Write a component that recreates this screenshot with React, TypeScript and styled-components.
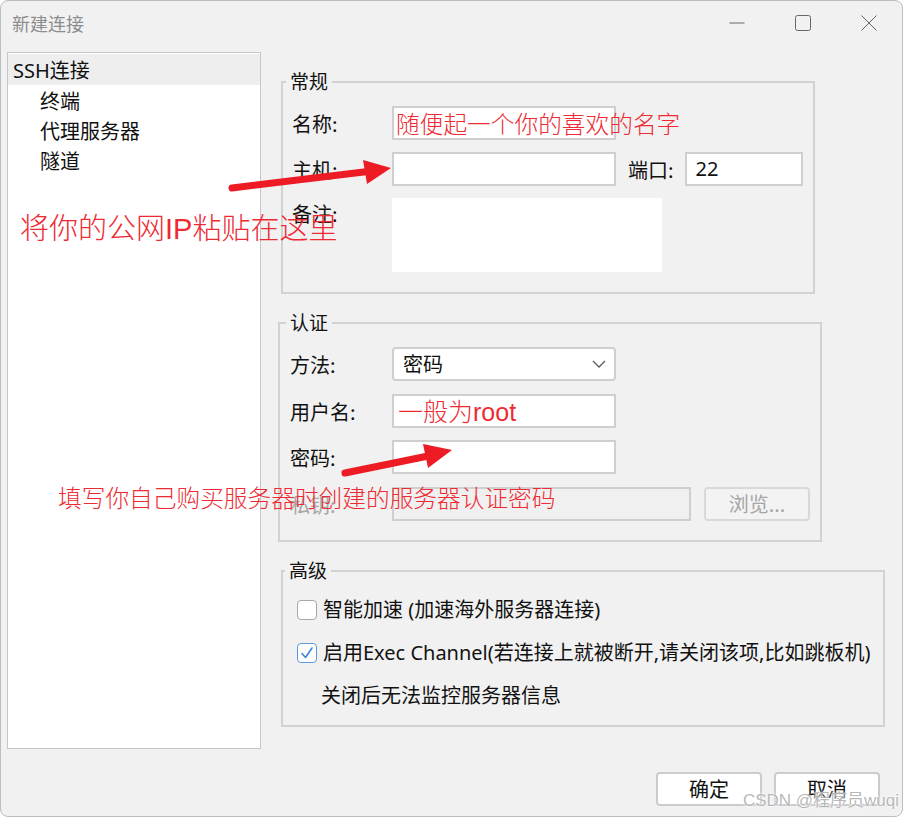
import React from 'react'
import styled, { createGlobalStyle } from 'styled-components'

const GlobalStyle = createGlobalStyle`
  html, body {
    margin: 0;
    padding: 0;
    background: #ffffff;
  }
  * {
    box-sizing: border-box;
  }
  body {
    font-family: "Noto Sans", "Noto Sans CJK SC", sans-serif;
  }
`

const uiFont = `"Noto Sans", "Noto Sans CJK SC", sans-serif`
const markFont = `"Liberation Sans", "Noto Sans CJK SC", sans-serif`
const red = '#ee2a33'

const Window = styled.div`
  position: relative;
  width: 903px;
  height: 817px;
  background: #f1f1f1;
  border: 1px solid #bdbdbd;
  border-radius: 8px;
  display: flex;
  flex-direction: column;
  overflow: hidden;
  font-family: ${uiFont};
  color: #111;
`

const TitleBar = styled.div`
  height: 43px;
  display: flex;
  align-items: center;
  padding-left: 11px;
`

const Title = styled.div`
  font-size: 18px;
  line-height: 24px;
  color: #8c8c8c;
  font-family: "Noto Sans CJK SC", sans-serif;
`

const Controls = styled.div`
  margin-left: auto;
  display: flex;
  height: 100%;
`

const ControlButton = styled.div`
  width: 66px;
  height: 100%;
  display: flex;
  align-items: center;
  justify-content: center;
  color: #666;
`

const Body = styled.div`
  display: flex;
  align-items: flex-start;
`

const Tree = styled.div`
  margin: 8px 0 0 6px;
  width: 254px;
  height: 697px;
  background: #fff;
  border: 1.5px solid #c6c6c6;
  padding-top: 1px;
`

const TreeItem = styled.div<{ $level: number; $selected?: boolean }>`
  height: ${p => (p.$selected ? 31 : 30)}px;
  display: flex;
  align-items: center;
  padding-top: ${p => (p.$selected ? 2 : 3)}px;
  padding-left: ${p => (p.$level === 0 ? 5 : 32)}px;
  background: ${p => (p.$selected ? '#eeeeee' : 'transparent')};
  font-size: 20px;
  line-height: 26px;
  font-family: "Noto Sans", "Noto Sans CJK SC", sans-serif;
`

const Column = styled.div`
  display: flex;
  flex-direction: column;
`

const Group = styled.div<{ $ml: number; $w: number; $mt: number; $pad: string }>`
  position: relative;
  margin-left: ${p => p.$ml}px;
  margin-top: ${p => p.$mt}px;
  width: ${p => p.$w}px;
  border: 2px solid #d2d2d2;
  padding: ${p => p.$pad};
  display: flex;
  flex-direction: column;
`

const Legend = styled.span<{ $left: number }>`
  position: absolute;
  top: -14px;
  left: ${p => p.$left}px;
  padding: 0 4px;
  background: #f1f1f1;
  font-size: 19px;
  line-height: 24px;
  font-family: "Noto Sans CJK SC", sans-serif;
`

const Row = styled.div<{ $gap?: number; $top?: boolean }>`
  display: flex;
  align-items: ${p => (p.$top ? 'flex-start' : 'center')};
  margin-top: ${p => p.$gap ?? 0}px;
`

const Label = styled.div<{ $w: number; $muted?: boolean; $pt?: number }>`
  width: ${p => p.$w}px;
  flex-shrink: 0;
  font-size: 20px;
  line-height: 28px;
  padding-top: ${p => p.$pt ?? 1}px;
  color: ${p => (p.$muted ? '#a6a6a6' : '#111')};
  font-family: "Noto Sans CJK SC", sans-serif;
`

const InlineLabel = styled(Label)`
  width: auto;
  margin: 0 11px 0 12px;
`

const Field = styled.div<{ $w: number; $disabled?: boolean }>`
  width: ${p => p.$w}px;
  height: 34px;
  background: ${p => (p.$disabled ? '#f0f0f0' : '#fff')};
  border: 2px solid #cfcfcf;
  display: flex;
  align-items: center;
  padding-left: 9px;
  font-size: 20px;
  line-height: 28px;
`

const Memo = styled.div`
  width: 270px;
  height: 74px;
  background: #fff;
`

const Select = styled(Field)`
  border-radius: 4px;
  justify-content: space-between;
  padding-right: 8px;
  font-family: "Noto Sans CJK SC", sans-serif;
`

const Button = styled.div<{ $disabled?: boolean }>`
  width: 106px;
  height: 34px;
  border: 2px solid ${p => (p.$disabled ? '#d8d8d8' : '#cccccc')};
  border-radius: 4px;
  background: ${p => (p.$disabled ? '#f3f3f3' : '#fff')};
  color: ${p => (p.$disabled ? '#a6a6a6' : '#111')};
  display: flex;
  align-items: center;
  justify-content: center;
  font-size: 20px;
  line-height: 28px;
  font-family: "Noto Sans CJK SC", sans-serif;
`

const BrowseButton = styled(Button)`
  margin-left: 13px;
`

const CheckRow = styled.div<{ $gap?: number }>`
  height: 30px;
  display: flex;
  align-items: center;
  margin-top: ${p => p.$gap ?? 0}px;
  font-size: 20px;
  line-height: 28px;
`

const Box = styled.span<{ $checked?: boolean }>`
  width: 20px;
  height: 20px;
  border: 1.5px solid ${p => (p.$checked ? '#5a9be0' : '#a8a8a8')};
  border-radius: 4px;
  background: #fff;
  display: flex;
  align-items: center;
  justify-content: center;
  margin-right: 6px;
  flex-shrink: 0;
`

const Note = styled.div`
  height: 30px;
  display: flex;
  align-items: center;
  margin-top: 12px;
  padding-left: 24px;
  font-size: 20px;
  line-height: 28px;
  font-family: "Noto Sans CJK SC", sans-serif;
`

const Footer = styled.div`
  display: flex;
  justify-content: flex-end;
  gap: 12px;
  padding: 23px 22px 0 0;
`

const Overlay = styled.svg`
  position: absolute;
  left: -1px;
  top: -1px;
  pointer-events: none;
`

const Mark = styled.div<{ $x: number; $y: number; $size: number }>`
  position: absolute;
  left: ${p => p.$x}px;
  top: ${p => p.$y}px;
  font-size: ${p => p.$size}px;
  line-height: ${p => p.$size}px;
  font-weight: 300;
  color: ${red};
  white-space: nowrap;
  font-family: ${markFont};
  pointer-events: none;
`

const Watermark = styled.div`
  position: absolute;
  right: 3px;
  bottom: 5px;
  font-size: 17px;
  line-height: 20px;
  color: rgba(160, 160, 160, 0.75);
  text-shadow: 0 0 2px #fff, 0 0 2px #fff;
  font-family: "Liberation Sans", "Noto Sans CJK SC", sans-serif;
`

const Chevron = () => (
  <svg width="14" height="8" viewBox="0 0 14 8">
    <polyline points="1,1 7,7 13,1" fill="none" stroke="#5a5a5a" strokeWidth="1.3" />
  </svg>
)

const Check = () => (
  <svg width="14" height="14" viewBox="0 0 14 14">
    <polyline points="2,7.5 5.5,11.5 12,2" fill="none" stroke="#3b86d8" strokeWidth="1.6" strokeLinecap="round" strokeLinejoin="round" />
  </svg>
)

const App: React.FC = () => {
  return (
    <>
      <GlobalStyle />
      <Window>
        <TitleBar>
          <Title>新建连接</Title>
          <Controls>
            <ControlButton>
              <svg width="16" height="16" viewBox="0 0 16 16">
                <line x1="0.5" y1="8" x2="15.5" y2="8" stroke="#666" strokeWidth="1" />
              </svg>
            </ControlButton>
            <ControlButton>
              <svg width="16" height="16" viewBox="0 0 16 16">
                <rect x="0.5" y="0.5" width="15" height="15" rx="2" fill="none" stroke="#666" strokeWidth="1" />
              </svg>
            </ControlButton>
            <ControlButton>
              <svg width="16" height="16" viewBox="0 0 16 16">
                <path d="M0.5 0.5 L15.5 15.5 M15.5 0.5 L0.5 15.5" stroke="#666" strokeWidth="1" />
              </svg>
            </ControlButton>
          </Controls>
        </TitleBar>

        <Body>
          <Tree>
            <TreeItem $level={0} $selected>SSH连接</TreeItem>
            <TreeItem $level={1}>终端</TreeItem>
            <TreeItem $level={1}>代理服务器</TreeItem>
            <TreeItem $level={1}>隧道</TreeItem>
          </Tree>

          <Column>
            <Group $ml={20} $w={534} $mt={37} $pad="23px 0 20px 9px">
              <Legend $left={3}>常规</Legend>
              <Row>
                <Label $w={100}>名称:</Label>
                <Field $w={224} />
              </Row>
              <Row $gap={12}>
                <Label $w={100}>主机:</Label>
                <Field $w={224} />
                <InlineLabel $w={0}>端口:</InlineLabel>
                <Field $w={118}>22</Field>
              </Row>
              <Row $gap={12} $top>
                <Label $w={100} $pt={2}>备注:</Label>
                <Memo />
              </Row>
            </Group>

            <Group $ml={17} $w={544} $mt={28} $pad="23px 0 19px 10px">
              <Legend $left={6}>认证</Legend>
              <Row>
                <Label $w={102}>方法:</Label>
                <Select $w={224}>
                  密码
                  <Chevron />
                </Select>
              </Row>
              <Row $gap={13}>
                <Label $w={102}>用户名:</Label>
                <Field $w={224} />
              </Row>
              <Row $gap={12}>
                <Label $w={102}>密码:</Label>
                <Field $w={224} />
              </Row>
              <Row $gap={13}>
                <Label $w={102} $muted>私钥:</Label>
                <Field $w={299} $disabled />
                <BrowseButton $disabled>浏览...</BrowseButton>
              </Row>
            </Group>

            <Group $ml={20} $w={604} $mt={28} $pad="23px 0 15px 14px">
              <Legend $left={2}>高级</Legend>
              <CheckRow>
                <Box />
                智能加速 (加速海外服务器连接)
              </CheckRow>
              <CheckRow $gap={13}>
                <Box $checked>
                  <Check />
                </Box>
                启用Exec Channel(若连接上就被断开,请关闭该项,比如跳板机)
              </CheckRow>
              <Note>关闭后无法监控服务器信息</Note>
            </Group>
          </Column>
        </Body>

        <Footer>
          <Button>确定</Button>
          <Button>取消</Button>
        </Footer>

        <Mark $x={395} $y={113} $size={23.7}>随便起一个你的喜欢的名字</Mark>
        <Mark $x={19} $y={214} $size={29}>将你的公网IP粘贴在这里</Mark>
        <Mark $x={397} $y={399} $size={25}>一般为root</Mark>
        <Mark $x={57} $y={487} $size={23.7}>填写你自己购买服务器时创建的服务器认证密码</Mark>

        <Overlay width="903" height="817" viewBox="0 0 903 817">
          <line x1="232" y1="188" x2="372" y2="171" stroke="#ed1c24" strokeWidth="7" strokeLinecap="round" />
          <polygon points="391,168 363,160 367,184" fill="#ed1c24" />
          <line x1="345" y1="473" x2="433" y2="455" stroke="#ed1c24" strokeWidth="7" strokeLinecap="round" />
          <polygon points="452,450 423,444 428,468" fill="#ed1c24" />
        </Overlay>

        <Watermark>CSDN @程序员wuqi</Watermark>
      </Window>
    </>
  )
}

export default App
